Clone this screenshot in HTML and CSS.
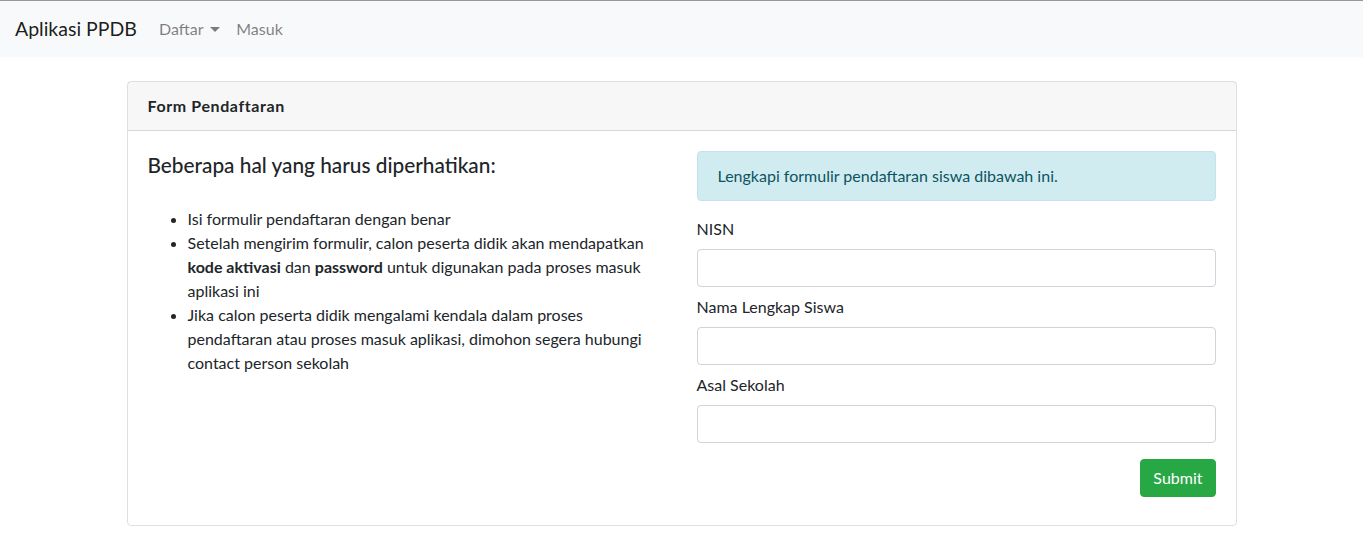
FILE: index.html
```html
<!DOCTYPE html>
<html lang="id">
<head>
<meta charset="utf-8">
<title>Aplikasi PPDB</title>
<link rel="stylesheet" href="styles.css">
</head>
<body>
<nav class="navbar">
  <a class="brand" href="#">Aplikasi PPDB</a>
  <ul class="nav">
    <li><a class="nav-link" href="#">Daftar <span class="caret"></span></a></li>
    <li><a class="nav-link" href="#">Masuk</a></li>
  </ul>
</nav>
<main class="container">
  <section class="card">
    <header class="card-header">Form Pendaftaran</header>
    <div class="card-body">
      <div class="col">
        <h5 class="title">Beberapa hal yang harus diperhatikan:</h5>
        <ul class="notes">
          <li>Isi formulir pendaftaran dengan benar</li>
          <li>Setelah mengirim formulir, calon peserta didik akan mendapatkan <b>kode aktivasi</b> dan <b>password</b> untuk digunakan pada proses masuk aplikasi ini</li>
          <li>Jika calon peserta didik mengalami kendala dalam proses pendaftaran atau proses masuk aplikasi, dimohon segera hubungi contact person sekolah</li>
        </ul>
      </div>
      <div class="col">
        <div class="alert">Lengkapi formulir pendaftaran siswa dibawah ini.</div>
        <form class="form">
          <label class="label">NISN</label>
          <input class="input" type="text">
          <label class="label">Nama Lengkap Siswa</label>
          <input class="input" type="text">
          <label class="label">Asal Sekolah</label>
          <input class="input" type="text">
          <div class="actions"><button class="btn" type="button">Submit</button></div>
        </form>
      </div>
    </div>
  </section>
</main>
</body>
</html>
```
FILE: styles.css
```css
* { box-sizing: border-box; }
html, body { margin: 0; }
body {
  font-family: "Lato", "Noto Sans", sans-serif;
  font-weight: 400;
  font-size: 16px;
  line-height: 1.5;
  color: #212529;
  background: #fff;
  border-top: 1px solid #999;
}
b { font-weight: 700; }
.navbar {
  display: flex;
  align-items: center;
  height: 56px;
  padding: 0 15px;
  background: #f8f9fa;
}
.brand {
  font-size: 19.5px;
  color: rgba(0,0,0,.9);
  text-decoration: none;
  margin-right: 14px;
  line-height: 30px;
}
.nav { display: flex; list-style: none; margin: 0; padding: 0; }
.nav-link {
  display: block;
  padding: 8px 8px;
  color: rgba(0,0,0,.5);
  text-decoration: none;
}
.caret {
  display: inline-block;
  vertical-align: 3px;
  margin-left: 3px;
  border-top: 5px solid;
  border-left: 5px solid transparent;
  border-right: 5px solid transparent;
}
.container {
  width: 1110px;
  margin: 24px auto 0;
}
.card {
  border: 1px solid rgba(0,0,0,.125);
  border-radius: 4px;
}
.card-header {
  padding: 12px 20px;
  background: rgba(0,0,0,.03);
  border-bottom: 1px solid rgba(0,0,0,.125);
  font-weight: 700;
  font-size: 16px;
  letter-spacing: .6px;
  line-height: 24px;
}
.card-body {
  display: grid;
  grid-template-columns: 1fr 1fr;
  column-gap: 30px;
  padding: 20px 20px 28px;
}
.title {
  margin: 0 0 30px;
  padding-top: 2px;
  font-size: 20.8px;
  font-weight: 500;
  line-height: 24px;
}
.notes { margin: 0; padding-left: 40px; }
.alert {
  padding: 12px 20px;
  background: #d1ecf1;
  border: 1px solid #bee5eb;
  color: #0c5460;
  border-radius: 4px;
  margin-bottom: 16px;
}
.form { display: flex; flex-direction: column; }
.label { margin-bottom: 8px; }
.input {
  height: 38px;
  border: 1px solid #ced4da;
  border-radius: 4px;
  margin-bottom: 8px;
  font: inherit;
  padding: 6px 12px;
}
.actions { display: flex; justify-content: flex-end; margin-top: 8px; }
.btn {
  font: inherit;
  color: #fff;
  background: #28a745;
  border: 1px solid #28a745;
  border-radius: 4px;
  padding: 6px 12px;
  line-height: 24px;
}
```
